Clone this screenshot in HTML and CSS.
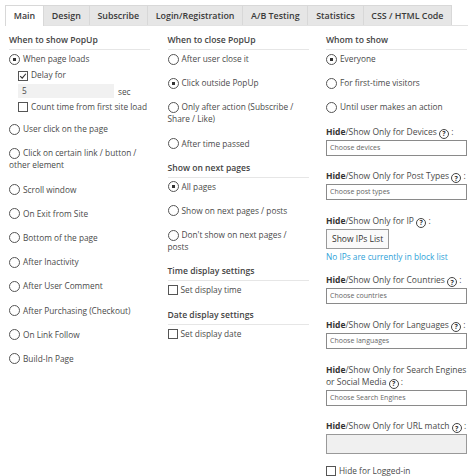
FILE: index.html
```html
<!DOCTYPE html>
<html>
<head>
<meta charset="utf-8">
<link rel="stylesheet" href="styles.css">
</head>
<body>
<div class="page">
  <ul class="tabs">
    <li class="tab active">Main</li>
    <li class="tab">Design</li>
    <li class="tab">Subscribe</li>
    <li class="tab">Login/Registration</li>
    <li class="tab">A/B Testing</li>
    <li class="tab">Statistics</li>
    <li class="tab">CSS / HTML Code</li>
  </ul>

  <div class="cols">
    <div class="col">
      <h3 class="head">When to show PopUp</h3>
      <div class="group">
        <div class="opt"><span class="radio on"></span>When page loads</div>
        <div class="sub">
          <div class="opt"><span class="check on"><svg viewBox="0 0 10 10" width="8" height="8"><path d="M1.5 5.2 L4 7.6 L8.6 2.2" fill="none" stroke="#333" stroke-width="1.4"/></svg></span>Delay for</div>
          <div class="delay"><span class="num">5</span><span class="unit">sec</span></div>
          <div class="opt"><span class="check"></span>Count time from first site load</div>
        </div>
      </div>
      <div class="opt"><span class="radio"></span>User click on the page</div>
      <div class="opt"><span class="radio"></span>Click on certain link / button / other element</div>
      <div class="opt"><span class="radio"></span>Scroll window</div>
      <div class="opt"><span class="radio"></span>On Exit from Site</div>
      <div class="opt"><span class="radio"></span>Bottom of the page</div>
      <div class="opt"><span class="radio"></span>After Inactivity</div>
      <div class="opt"><span class="radio"></span>After User Comment</div>
      <div class="opt"><span class="radio"></span>After Purchasing (Checkout)</div>
      <div class="opt"><span class="radio"></span>On Link Follow</div>
      <div class="opt"><span class="radio"></span>Build-In Page</div>
    </div>

    <div class="col">
      <h3 class="head">When to close PopUp</h3>
      <div class="opt"><span class="radio"></span>After user close it</div>
      <div class="opt"><span class="radio on"></span>Click outside PopUp</div>
      <div class="opt"><span class="radio"></span>Only after action (Subscribe / Share / Like)</div>
      <div class="opt"><span class="radio"></span>After time passed</div>
      <h3 class="head">Show on next pages</h3>
      <div class="opt"><span class="radio on"></span>All pages</div>
      <div class="opt"><span class="radio"></span>Show on next pages / posts</div>
      <div class="opt"><span class="radio"></span>Don't show on next pages / posts</div>
      <h3 class="head">Time display settings</h3>
      <div class="opt"><span class="check"></span>Set display time</div>
      <h3 class="head">Date display settings</h3>
      <div class="opt"><span class="check"></span>Set display date</div>
    </div>

    <div class="col">
      <h3 class="head">Whom to show</h3>
      <div class="opt"><span class="radio on"></span>Everyone</div>
      <div class="opt"><span class="radio"></span>For first-time visitors</div>
      <div class="opt"><span class="radio"></span>Until user makes an action</div>
      <div class="fields">
        <div class="field">
          <div class="label"><b>Hide</b>/Show Only for Devices <span class="help">?</span> :</div>
          <div class="select">Choose devices</div>
        </div>
        <div class="field">
          <div class="label"><b>Hide</b>/Show Only for Post Types <span class="help">?</span> :</div>
          <div class="select">Choose post types</div>
        </div>
        <div class="field ip">
          <div class="label"><b>Hide</b>/Show Only for IP <span class="help">?</span> :</div>
          <div><span class="btn">Show IPs List</span></div>
          <div class="note">No IPs are currently in block list</div>
        </div>
        <div class="field">
          <div class="label"><b>Hide</b>/Show Only for Countries <span class="help">?</span> :</div>
          <div class="select">Choose countries</div>
        </div>
        <div class="field">
          <div class="label"><b>Hide</b>/Show Only for Languages <span class="help">?</span> :</div>
          <div class="select">Choose languages</div>
        </div>
        <div class="field">
          <div class="label"><b>Hide</b>/Show Only for Search Engines or Social Media <span class="help">?</span> :</div>
          <div class="select">Choose Search Engines</div>
        </div>
        <div class="field">
          <div class="label"><b>Hide</b>/Show Only for URL match <span class="help">?</span> :</div>
          <div class="textarea"></div>
        </div>
        <div class="opt logged"><span class="check"></span>Hide for Logged-in</div>
      </div>
    </div>
  </div>
</div>
</body>
</html>
```

FILE: styles.css
```css
* { box-sizing: border-box; }

body {
  margin: 0;
  background: #fff;
  font-family: "Open Sans", "Noto Sans", sans-serif;
  font-size: 8.3px;
  color: #4a4a4a;
}

.page {
  padding: 5px 6px 0 5px;
}

.tabs {
  display: flex;
  list-style: none;
  margin: 0;
  padding: 0;
  height: 21px;
  border-bottom: 1px solid #e2e2e2;
}

.tab {
  height: 20px;
  padding: 0 7.8px;
  line-height: 19px;
  white-space: nowrap;
  background: #e6e6e6;
  border: 1px solid #d8d8d8;
  border-bottom: none;
  margin-right: -1px;
  font-weight: 600;
  font-size: 8.9px;
  color: #3a3a3a;
}

.tab.active {
  background: #fff;
  height: 21px;
}

.cols {
  display: grid;
  grid-template-columns: repeat(3, 141px);
  column-gap: 17.5px;
  padding-left: 4px;
  margin-top: 8px;
}

.col {
  display: flex;
  flex-direction: column;
  gap: 12.2px;
}

.head {
  margin: 0 0 -9.2px;
  font-size: 8.6px;
  font-weight: 600;
  line-height: 12px;
  color: #444;
  padding-bottom: 3px;
  border-bottom: 1px solid #e6e6e6;
}

.opt {
  line-height: 12px;
}

.radio {
  display: inline-block;
  width: 11px;
  height: 11px;
  margin-right: 3px;
  border: 1px solid #555;
  border-radius: 50%;
  vertical-align: -2.5px;
  background: #fff;
}

.radio.on {
  background: radial-gradient(circle, #333 0 1.5px, #fff 2px);
}

.check {
  display: inline-flex;
  align-items: center;
  justify-content: center;
  width: 10px;
  height: 10px;
  margin-right: 3px;
  border: 1px solid #555;
  vertical-align: -2px;
  background: #fff;
}

.group {
  display: flex;
  flex-direction: column;
  margin-bottom: -2px;
}

.sub {
  display: flex;
  flex-direction: column;
  gap: 3px;
  margin-top: 4px;
  padding-left: 9px;
}

.delay {
  display: flex;
  align-items: center;
  height: 14px;
}

.num {
  width: 96px;
  height: 14px;
  line-height: 14px;
  padding-left: 4px;
  background: #f1f1f1;
}

.unit {
  margin-left: 4px;
}

.fields {
  display: flex;
  flex-direction: column;
  gap: 14.6px;
}

.field {
  display: flex;
  flex-direction: column;
  gap: 2px;
}

.field.ip {
  margin-bottom: -3px;
}

.label {
  line-height: 12px;
  font-size: 8.5px;
}

.label b {
  font-weight: 700;
  color: #333;
}

.help {
  display: inline-flex;
  align-items: center;
  justify-content: center;
  width: 10px;
  height: 10px;
  margin: -3px 0;
  border: 1.2px solid #444;
  border-radius: 50%;
  font-size: 7px;
  font-weight: 700;
  color: #333;
  vertical-align: -1.5px;
  line-height: 1;
}

.select {
  height: 16px;
  border: 1px solid #8a8a8a;
  background: #fff;
  padding-left: 3px;
  font-size: 7px;
  line-height: 14px;
  color: #666;
}

.btn {
  display: inline-block;
  height: 20px;
  padding: 0 5px;
  border: 1px solid #999;
  background: #fafafa;
  line-height: 18px;
  font-size: 8.5px;
  color: #333;
}

.note {
  line-height: 12px;
  color: #2e9fd8;
}

.textarea {
  height: 20px;
  border: 1px solid #999;
  background: #f0f0f0;
}

.logged {
  margin-top: -4px;
}
```
